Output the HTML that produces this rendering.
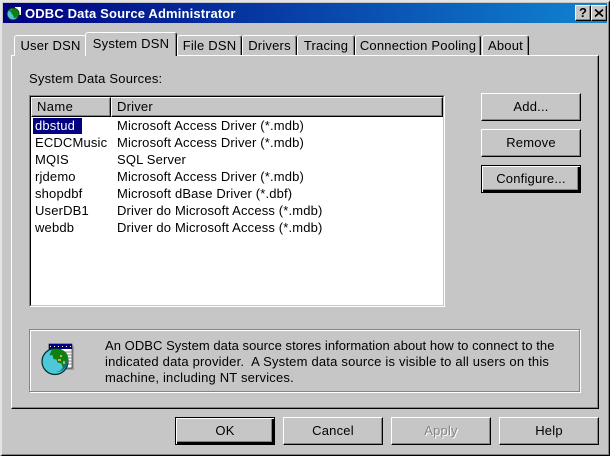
<!DOCTYPE html>
<html><head><meta charset="utf-8"><style>
html,body{margin:0;padding:0}
#w{position:relative;width:610px;height:456px;background:#c6c6c6;overflow:hidden;font:13px "Liberation Sans",Arial,sans-serif;color:#000}
.a{position:absolute;box-sizing:border-box}
.t{position:absolute;white-space:nowrap;line-height:16px}
.tab{position:absolute;box-sizing:border-box;background:#c6c6c6;border-top:1px solid #fff;border-left:1px solid #fff;border-right:1px solid #000;box-shadow:inset -1px 0 0 #848484;border-top-left-radius:3px;border-top-right-radius:3px;text-align:center;white-space:nowrap;line-height:16px;letter-spacing:.2px}
.btn{position:absolute;box-sizing:border-box;height:28px;width:100px;background:#c6c6c6;border-top:1px solid #fff;border-left:1px solid #fff;border-right:1px solid #000;border-bottom:1px solid #000;box-shadow:inset -1px -1px 0 #848484;text-align:center;line-height:25px;letter-spacing:.2px}
.def{border:1px solid #000;box-shadow:inset 1px 1px 0 #fff,inset -2px -2px 0 #000,inset -3px -3px 0 #848484}
.row{position:absolute;left:35px;white-space:nowrap;line-height:17px;letter-spacing:.16px}
</style></head><body><div id="w">
<div class="a" style="left:0;top:0;width:610px;height:456px;border-top:2px solid #e4e4e4;border-left:2px solid #e4e4e4;border-right:1px solid #000;border-bottom:1px solid #000;box-shadow:inset -1px -1px 0 #848484"></div>
<div class="a" style="left:3px;top:3px;width:604px;height:20px;background:linear-gradient(90deg,#000080,#1084d0)"></div>
<svg class="a" style="left:6px;top:5px" width="16" height="16" viewBox="0 0 16 16"><rect x="9" y="2" width="6" height="8" fill="#fff"/><circle cx="7" cy="9" r="6" fill="#4cc4d4" stroke="#003030"/><path d="M6 3.5h4l2 3 1 3-2 3-3 .5-1-3-2-2z" fill="#108010"/><path d="M4 4l2 1-1 2-2-1z" fill="#108010"/></svg>
<div class="t" style="left:25px;top:6px;color:#fff;font-weight:bold;letter-spacing:.15px">ODBC Data Source Administrator</div>
<div class="a" style="left:575px;top:5px;width:16px;height:16px;background:#c6c6c6;border-top:1px solid #fff;border-left:1px solid #fff;border-right:1px solid #000;border-bottom:1px solid #000;box-shadow:inset -1px -1px 0 #848484;font-weight:bold;font-size:13px;line-height:14px;text-align:center">?</div>
<div class="a" style="left:591px;top:5px;width:16px;height:16px;background:#c6c6c6;border-top:1px solid #fff;border-left:1px solid #fff;border-right:1px solid #000;border-bottom:1px solid #000;box-shadow:inset -1px -1px 0 #848484"><svg style="position:absolute;left:2px;top:2px" width="10" height="10" viewBox="0 0 10 10"><path d="M1 1.5L9 8.5M9 1.5L1 8.5" stroke="#000" stroke-width="1.7"/></svg></div>

<!-- page -->
<div class="a" style="left:11px;top:55px;width:588px;height:354px;background:#c6c6c6;border-top:1px solid #fff;border-left:1px solid #fff;border-right:1px solid #000;border-bottom:1px solid #000;box-shadow:inset -1px -1px 0 #848484"></div>

<!-- tabs -->
<div class="tab" style="left:14px;top:35px;width:72px;height:21px;padding-top:2px;border-right:0;box-shadow:none">User DSN</div>
<div class="tab" style="left:177px;top:35px;width:65px;height:20px;padding-top:2px">File DSN</div>
<div class="tab" style="left:242px;top:35px;width:55px;height:20px;padding-top:2px">Drivers</div>
<div class="tab" style="left:297px;top:35px;width:58px;height:20px;padding-top:2px">Tracing</div>
<div class="tab" style="left:355px;top:35px;width:126px;height:20px;padding-top:2px">Connection Pooling</div>
<div class="tab" style="left:482px;top:35px;width:47px;height:20px;padding-top:2px">About</div>
<div class="tab" style="left:85px;top:32px;width:92px;height:24px;padding-top:3px;border-bottom:0">System DSN</div>

<div class="t" style="left:29px;top:71px;letter-spacing:.2px">System Data Sources:</div>

<!-- list -->
<div class="a" style="left:29px;top:95px;width:416px;height:212px;background:#fff;border-top:1px solid #848484;border-left:1px solid #848484;border-right:1px solid #fff;border-bottom:1px solid #fff"></div>
<div class="a" style="left:30px;top:96px;width:414px;height:210px;border-top:1px solid #000;border-left:1px solid #000;border-right:1px solid #c6c6c6;border-bottom:1px solid #c6c6c6"></div>
<div class="a" style="left:31px;top:97px;width:80px;height:20px;background:#c6c6c6;border-top:1px solid #fff;border-left:1px solid #fff;border-right:1px solid #000;border-bottom:1px solid #000;box-shadow:inset -1px -1px 0 #848484"></div>
<div class="a" style="left:111px;top:97px;width:332px;height:20px;background:#c6c6c6;border-top:1px solid #fff;border-left:1px solid #fff;border-right:1px solid #000;border-bottom:1px solid #000;box-shadow:inset -1px -1px 0 #848484"></div>
<div class="t" style="left:37px;top:99px;letter-spacing:.4px">Name</div>
<div class="t" style="left:117px;top:99px;letter-spacing:.2px">Driver</div>
<div class="a" style="left:33px;top:118px;width:49px;height:16px;background:#000080"></div>
<div class="row" style="top:117px;color:#fff">dbstud</div>
<div class="row" style="top:134px">ECDCMusic</div>
<div class="row" style="top:151px">MQIS</div>
<div class="row" style="top:168px">rjdemo</div>
<div class="row" style="top:185px">shopdbf</div>
<div class="row" style="top:202px">UserDB1</div>
<div class="row" style="top:219px">webdb</div>
<div class="row" style="left:117px;top:117px">Microsoft Access Driver (*.mdb)</div>
<div class="row" style="left:117px;top:134px">Microsoft Access Driver (*.mdb)</div>
<div class="row" style="left:117px;top:151px">SQL Server</div>
<div class="row" style="left:117px;top:168px">Microsoft Access Driver (*.mdb)</div>
<div class="row" style="left:117px;top:185px">Microsoft dBase Driver (*.dbf)</div>
<div class="row" style="left:117px;top:202px">Driver do Microsoft Access (*.mdb)</div>
<div class="row" style="left:117px;top:219px">Driver do Microsoft Access (*.mdb)</div>

<!-- side buttons -->
<div class="btn" style="left:481px;top:93px">Add...</div>
<div class="btn" style="left:481px;top:129px">Remove</div>
<div class="btn def" style="left:481px;top:165px">Configure...</div>

<!-- info -->
<div class="a" style="left:29px;top:329px;width:551px;height:63px;border:1px solid #848484;box-shadow:inset 1px 1px 0 #fff,1px 1px 0 #fff"></div>
<svg class="a" style="left:40px;top:342px" width="34" height="34" viewBox="0 0 34 34"><rect x="11" y="4" width="23" height="24" fill="#848484" opacity=".6"/><rect x="9" y="2" width="23" height="24" fill="#fff" stroke="#000" stroke-width=".6"/><rect x="9" y="2" width="23" height="5" fill="#000080"/><path d="M10 4.500h21" stroke="#fff" stroke-dasharray="1 3"/><path d="M23 10h9M23 13h9M23 16h9M23 19h9M23 22h9" stroke="#848484"/><circle cx="15" cy="19.500" r="13" fill="#4cc8d8" stroke="#002830" stroke-width="1.200"/><path d="M12 7.500c5-1.500 11-.5 14 3 2.500 3.500 3 8 1.500 12-1 1.500-2 3-3.500 4-1.500-1-2-3-2.500-5l-4-1-1-3-3-.5-1-4-3 .5 1-3z" fill="#108010"/><path d="M27 14c2 4 1 10-3 13-2 2-5 3-8 3 5-1 7-3 7-7 3-2 4-6 4-9z" fill="#087878"/><path d="M20 13h2v2h-2zM18 17h3v2h-3zM23 19h2v3h-2z" fill="#c8b050"/></svg>
<div class="t" style="left:105px;top:338px;letter-spacing:.05px">An ODBC System data source stores information about how to connect to the</div>
<div class="t" style="left:105px;top:354px;letter-spacing:.2px">indicated data provider.&nbsp; A System data source is visible to all users on this</div>
<div class="t" style="left:105px;top:370px;letter-spacing:.18px">machine, including NT services.</div>

<!-- bottom buttons -->
<div class="btn def" style="left:175px;top:417px">OK</div>
<div class="btn" style="left:283px;top:417px">Cancel</div>
<div class="btn" style="left:391px;top:417px;color:#848484;text-shadow:1px 1px 0 #fff">Apply</div>
<div class="btn" style="left:499px;top:417px">Help</div>
</div></body></html>
